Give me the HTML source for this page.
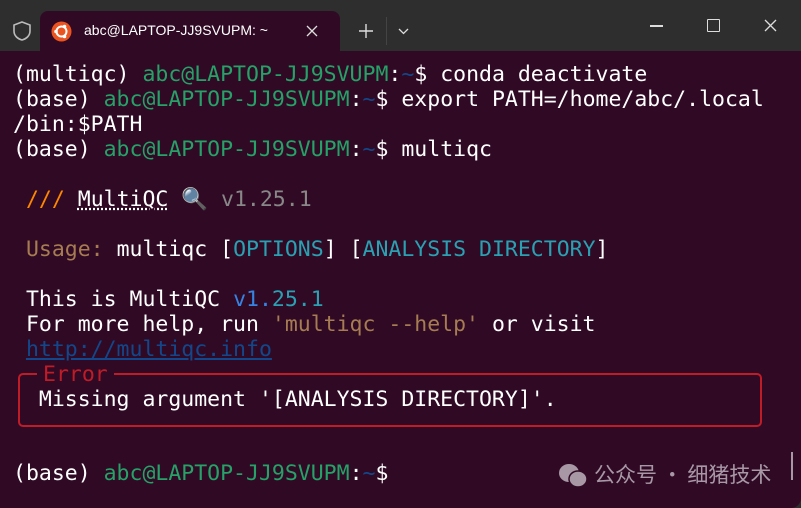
<!DOCTYPE html><html><head><meta charset="utf-8"><style>
body{margin:0;width:801px;height:508px;overflow:hidden;background:#2e2e2e;position:relative;font-family:"DejaVu Sans Mono","Liberation Mono",monospace}
.term{position:absolute;left:0;top:51px;width:801px;height:457px;background:#300a24;border-radius:0 0 10px 0}
.tab{position:absolute;left:40px;top:11px;width:300px;height:41px;background:#300a24;border-radius:8px 8px 0 0}
.tt{position:absolute;left:84px;top:22px;color:#fff;font:14px "Liberation Sans",sans-serif}
.l{position:absolute;left:13px;white-space:pre;font-size:21.5px;line-height:25px;color:#fff;margin-top:1px}
.g{color:#26a269}.b{color:#12488b}.o{color:#ff8700}.u{color:#a67c52}.c{color:#2aa1b3}.v{color:#3584e4}.gr{color:#888}
.box{position:absolute;left:18px;top:373px;width:740px;height:50px;border:2px solid #c01c28;border-radius:5px}
.wm{position:absolute;left:594px;top:459px;color:#a898a6;font:21px "Noto Sans CJK SC",sans-serif}
</style></head><body>
<svg style="position:absolute;left:12px;top:20px" width="20" height="22"><path d="M10 2 L18 5 V11 C18 16 14 19 10 20 C6 19 2 16 2 11 V5 Z" fill="none" stroke="#bbb" stroke-width="1.6"/></svg>
<div class="tab"></div>
<svg style="position:absolute;left:51px;top:21px" width="21" height="21"><circle cx="10.5" cy="10.5" r="10" fill="#e95420"/><circle cx="10.5" cy="10.5" r="5" fill="none" stroke="#fff" stroke-width="2"/><circle cx="5" cy="10.5" r="1.8" fill="#fff"/><circle cx="13.5" cy="5.5" r="1.8" fill="#fff"/><circle cx="13.5" cy="15.5" r="1.8" fill="#fff"/></svg>
<div class="tt">abc@LAPTOP-JJ9SVUPM: ~</div>
<svg style="position:absolute;left:306px;top:25px" width="12" height="12"><path d="M1 1L11 11M11 1L1 11" stroke="#ddd" stroke-width="1.3"/></svg>
<svg style="position:absolute;left:359px;top:24px" width="14" height="14"><path d="M7 0V14M0 7H14" stroke="#ddd" stroke-width="1.4"/></svg>
<div style="position:absolute;left:386px;top:17px;width:1px;height:28px;background:#444"></div>
<svg style="position:absolute;left:398px;top:28px" width="11" height="7"><path d="M1 1L5.5 5.5L10 1" stroke="#ddd" fill="none" stroke-width="1.3"/></svg>
<div style="position:absolute;left:650px;top:25px;width:13px;height:1.5px;background:#ddd"></div>
<div style="position:absolute;left:707px;top:19px;width:11px;height:11px;border:1.3px solid #ddd;border-radius:1px"></div>
<svg style="position:absolute;left:764px;top:19px" width="13" height="13"><path d="M1 1L12 12M12 1L1 12" stroke="#ddd" stroke-width="1.3"/></svg>
<div class="term"></div>
<div class="l" style="top:61px">(multiqc) <span class="g">abc@LAPTOP-JJ9SVUPM</span>:<span class="b">~</span>$ conda deactivate</div>
<div class="l" style="top:86px">(base) <span class="g">abc@LAPTOP-JJ9SVUPM</span>:<span class="b">~</span>$ export PATH=/home/abc/.local</div>
<div class="l" style="top:111px">/bin:$PATH</div>
<div class="l" style="top:136px">(base) <span class="g">abc@LAPTOP-JJ9SVUPM</span>:<span class="b">~</span>$ multiqc</div>
<div class="l" style="top:186px"> <span class="o">///</span> <span style="text-decoration:underline dotted">MultiQC</span> 🔍 <span class="gr">v1.25.1</span></div>
<div class="l" style="top:236px"> <span class="u">Usage:</span> multiqc [<span class="c">OPTIONS</span>] [<span class="c">ANALYSIS DIRECTORY</span>]</div>
<div class="l" style="top:286px"> This is MultiQC <span class="v">v1.</span><span class="c">25.1</span></div>
<div class="l" style="top:311px"> For more help, run <span class="u">'multiqc --help'</span> or visit</div>
<div class="l" style="top:336px"> <span style="color:#12488b;text-decoration:underline">http://multiqc.info</span></div>
<div class="box"></div>
<div class="l" style="top:361px;left:37px;color:#c01c28;background:#300a24;padding:0 6px">Error</div>
<div class="l" style="top:386px">  Missing argument '[ANALYSIS DIRECTORY]'.</div>
<div class="l" style="top:460px">(base) <span class="g">abc@LAPTOP-JJ9SVUPM</span>:<span class="b">~</span>$</div>
<svg style="position:absolute;left:558px;top:462px" width="32" height="28"><ellipse cx="11" cy="11" rx="10" ry="9" fill="#a898a6"/><ellipse cx="20" cy="17" rx="9" ry="8" fill="#a898a6" stroke="#300a24" stroke-width="1.5"/></svg>
<div class="wm">公众号 · 细猪技术</div>
<div style="position:absolute;left:791px;top:452px;width:2px;height:28px;background:#a898a6"></div>
</body></html>
